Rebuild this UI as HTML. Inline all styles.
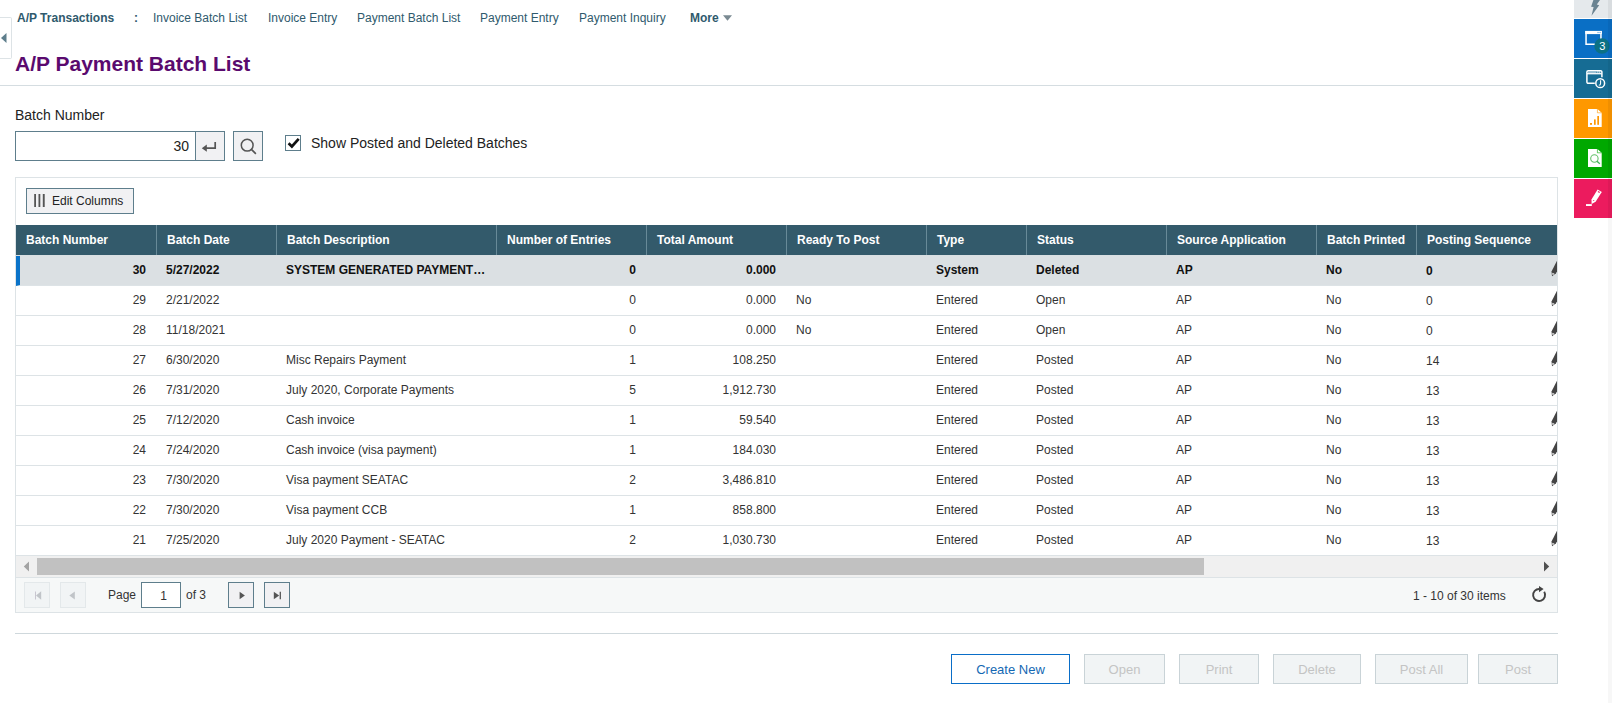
<!DOCTYPE html>
<html><head><meta charset="utf-8">
<style>
*{box-sizing:border-box;margin:0;padding:0}
html,body{width:1612px;height:703px;overflow:hidden;background:#fff;font-family:"Liberation Sans",sans-serif;color:#222;position:relative}
.a{position:absolute;white-space:nowrap}
.nav{font-size:12px;color:#2f5a6d;line-height:14px}
.nav b{font-weight:bold}
.tab{left:-1px;top:17px;width:13px;height:42px;border:1px solid #dde3e6;border-left:none;border-radius:0 2px 2px 0;background:#fff}
.title{left:15px;top:52px;font-size:21px;font-weight:bold;color:#5a0a6e;line-height:24px}
.hr{left:0;top:85px;width:1573px;height:1px;background:#d5dde1}
.lbl{left:15px;top:107px;font-size:14px;line-height:16px;color:#222}
.inp{left:15px;top:131px;width:182px;height:30px;border:1px solid #5e7e8c;background:#fff}
.inp span{position:absolute;right:7px;top:6px;font-size:14px;line-height:16px;color:#222}
.ent{left:195px;top:131px;width:30px;height:30px;border:1px solid #5e7e8c;background:#f1f1f3}
.srch{left:233px;top:131px;width:30px;height:30px;border:1px solid #5e7e8c;background:#f1f1f3}
.chk{left:285px;top:135px;width:16px;height:16px;border:1px solid #5e7e8c;background:#fff}
.chklbl{left:311px;top:135px;font-size:14px;line-height:16px;color:#222}
.grid{left:15px;top:177px;width:1543px;height:436px;border:1px solid #dde3e6;background:#fff}
.editcol{left:26px;top:188px;width:108px;height:26px;border:1px solid #5e7e8c;background:#f1f1f3;font-size:12px;line-height:14px;color:#222}
.hdr{left:16px;top:225px;width:1541px;height:30px;background:#335a6b}
.hdr span{position:absolute;top:8px;font-size:12px;font-weight:bold;color:#fff;line-height:14px;white-space:nowrap}
.hdr i{position:absolute;top:0;width:1px;height:30px;background:#688a98}
.row{position:absolute;left:16px;width:1541px;height:30px;border-bottom:1px solid #dde3e6;font-size:12px;color:#333;overflow:hidden}
.row span{position:absolute;top:7px;line-height:14px;white-space:nowrap}
.row .pen{position:absolute;left:1535px;top:5px}
.row.sel{background:#dbe0e3;font-weight:bold;color:#111;border-left:4px solid #0a73c9}
.row.sel span,.row.sel .pen{margin-left:-4px}
.r{text-align:right}
.scr{left:16px;top:556px;width:1541px;height:22px;background:#f0f0f0;border-bottom:1px solid #dde3e6}
.thumb{left:37px;top:559px;width:1167px;height:15px;background:#c1c1c1}
.pager{left:16px;top:578px;width:1541px;height:34px;background:#f6f8f8}
.pbtn{width:26px;height:26px;border:1px solid #5e7e8c;background:#f1f1f3}
.pbtn.dis{border-color:#e3e8ea;background:#f1f4f5}
.hr2{left:15px;top:633px;width:1543px;height:1px;background:#cfd8dc}
.btn{top:654px;height:30px;font-size:13px;line-height:15px;text-align:center;padding-top:7px;border:1px solid #c9d3d7;background:#f1f4f5;color:#c4c4c4}
.btn.pri{border-color:#0a6ec8;background:#fff;color:#1468b3}
.side{left:1573px;width:39px}
</style></head><body>
<!-- nav -->
<div class="a nav" style="left:17px;top:11px"><b>A/P Transactions</b></div>
<div class="a nav" style="left:134px;top:11px"><b>:</b></div>
<div class="a nav" style="left:153px;top:11px">Invoice Batch List</div>
<div class="a nav" style="left:268px;top:11px">Invoice Entry</div>
<div class="a nav" style="left:357px;top:11px">Payment Batch List</div>
<div class="a nav" style="left:480px;top:11px">Payment Entry</div>
<div class="a nav" style="left:579px;top:11px">Payment Inquiry</div>
<div class="a nav" style="left:690px;top:11px"><b>More</b></div>
<svg class="a" style="left:723px;top:15px" width="10" height="7" viewBox="0 0 10 7"><path d="M0 0.3h9l-4.5 5.4z" fill="#7a8a92"/></svg>
<div class="a tab"></div>
<svg class="a" style="left:0px;top:32px" width="7" height="12" viewBox="0 0 7 12"><path d="M6.5 1v10L1 6z" fill="#5e7e8c"/></svg>

<div class="a title">A/P Payment Batch List</div>
<div class="a hr"></div>

<div class="a lbl">Batch Number</div>
<div class="a inp"><span>30</span></div>
<div class="a ent"><svg style="position:absolute;left:5px;top:9px" width="18" height="12" viewBox="0 0 18 12"><path d="M14.2 1v6.2H5" stroke="#555" stroke-width="1.7" fill="none"/><path d="M0.8 7.2l5-3.6v7.2z" fill="#555"/></svg></div>
<div class="a srch"><svg style="position:absolute;left:5px;top:5px" width="20" height="20" viewBox="0 0 20 20"><circle cx="8.2" cy="8.2" r="5.9" stroke="#555" stroke-width="1.5" fill="none"/><path d="M12.4 12.4l4.5 4.5" stroke="#555" stroke-width="1.6"/></svg></div>
<div class="a chk"><svg style="position:absolute;left:1px;top:1px" width="13" height="12" viewBox="0 0 13 12"><path d="M1.6 6.2l3.3 3.3 6.8-7.6" stroke="#111" stroke-width="2.7" fill="none"/></svg></div>
<div class="a chklbl">Show Posted and Deleted Batches</div>

<div class="a grid"></div>
<div class="a editcol"><svg style="position:absolute;left:7px;top:5px" width="12" height="14" viewBox="0 0 12 14"><rect x="0.2" y="0" width="1.8" height="13" fill="#555"/><rect x="4.5" y="0" width="1.8" height="13" fill="#555"/><rect x="8.8" y="0" width="1.9" height="13" fill="#555"/></svg><span style="position:absolute;left:25px;top:5px">Edit Columns</span></div>
<div class="a" style="left:16px;top:255px;width:1541px;height:1px;background:#d9dfe2"></div>
<div class="a hdr">
<span style="left:10px">Batch Number</span>
<span style="left:151px">Batch Date</span>
<span style="left:271px">Batch Description</span>
<span style="left:491px">Number of Entries</span>
<span style="left:641px">Total Amount</span>
<span style="left:781px">Ready To Post</span>
<span style="left:921px">Type</span>
<span style="left:1021px">Status</span>
<span style="left:1161px">Source Application</span>
<span style="left:1311px">Batch Printed</span>
<span style="left:1411px">Posting Sequence</span>
<i style="left:140px"></i>
<i style="left:260px"></i>
<i style="left:480px"></i>
<i style="left:630px"></i>
<i style="left:770px"></i>
<i style="left:910px"></i>
<i style="left:1010px"></i>
<i style="left:1150px"></i>
<i style="left:1300px"></i>
<i style="left:1400px"></i>
</div>
<div class="row sel" style="top:256px">
<span class="r" style="right:1411px">30</span>
<span style="left:150px">5/27/2022</span>
<span style="left:270px">SYSTEM GENERATED PAYMENT…</span>
<span class="r" style="right:921px">0</span>
<span class="r" style="right:781px">0.000</span>
<span style="left:920px">System</span>
<span style="left:1020px">Deleted</span>
<span style="left:1160px">AP</span>
<span style="left:1310px">No</span>
<span style="left:1410px;top:8px">0</span>
<svg class="pen" width="12" height="17" viewBox="0 0 12 17"><path d="M1 15.2L0.5 10.6L7 -2.2L11.2 -0.2L4.9 12.6Z" fill="#444"/><path d="M1.5 14.1L1.3 11.7L3.8 12.9Z" fill="#fff"/></svg>
</div>
<div class="row" style="top:286px">
<span class="r" style="right:1411px">29</span>
<span style="left:150px">2/21/2022</span>
<span class="r" style="right:921px">0</span>
<span class="r" style="right:781px">0.000</span>
<span style="left:780px">No</span>
<span style="left:920px">Entered</span>
<span style="left:1020px">Open</span>
<span style="left:1160px">AP</span>
<span style="left:1310px">No</span>
<span style="left:1410px;top:8px">0</span>
<svg class="pen" width="12" height="17" viewBox="0 0 12 17"><path d="M1 15.2L0.5 10.6L7 -2.2L11.2 -0.2L4.9 12.6Z" fill="#444"/><path d="M1.5 14.1L1.3 11.7L3.8 12.9Z" fill="#fff"/></svg>
</div>
<div class="row" style="top:316px">
<span class="r" style="right:1411px">28</span>
<span style="left:150px">11/18/2021</span>
<span class="r" style="right:921px">0</span>
<span class="r" style="right:781px">0.000</span>
<span style="left:780px">No</span>
<span style="left:920px">Entered</span>
<span style="left:1020px">Open</span>
<span style="left:1160px">AP</span>
<span style="left:1310px">No</span>
<span style="left:1410px;top:8px">0</span>
<svg class="pen" width="12" height="17" viewBox="0 0 12 17"><path d="M1 15.2L0.5 10.6L7 -2.2L11.2 -0.2L4.9 12.6Z" fill="#444"/><path d="M1.5 14.1L1.3 11.7L3.8 12.9Z" fill="#fff"/></svg>
</div>
<div class="row" style="top:346px">
<span class="r" style="right:1411px">27</span>
<span style="left:150px">6/30/2020</span>
<span style="left:270px">Misc Repairs Payment</span>
<span class="r" style="right:921px">1</span>
<span class="r" style="right:781px">108.250</span>
<span style="left:920px">Entered</span>
<span style="left:1020px">Posted</span>
<span style="left:1160px">AP</span>
<span style="left:1310px">No</span>
<span style="left:1410px;top:8px">14</span>
<svg class="pen" width="12" height="17" viewBox="0 0 12 17"><path d="M1 15.2L0.5 10.6L7 -2.2L11.2 -0.2L4.9 12.6Z" fill="#444"/><path d="M1.5 14.1L1.3 11.7L3.8 12.9Z" fill="#fff"/></svg>
</div>
<div class="row" style="top:376px">
<span class="r" style="right:1411px">26</span>
<span style="left:150px">7/31/2020</span>
<span style="left:270px">July 2020, Corporate Payments</span>
<span class="r" style="right:921px">5</span>
<span class="r" style="right:781px">1,912.730</span>
<span style="left:920px">Entered</span>
<span style="left:1020px">Posted</span>
<span style="left:1160px">AP</span>
<span style="left:1310px">No</span>
<span style="left:1410px;top:8px">13</span>
<svg class="pen" width="12" height="17" viewBox="0 0 12 17"><path d="M1 15.2L0.5 10.6L7 -2.2L11.2 -0.2L4.9 12.6Z" fill="#444"/><path d="M1.5 14.1L1.3 11.7L3.8 12.9Z" fill="#fff"/></svg>
</div>
<div class="row" style="top:406px">
<span class="r" style="right:1411px">25</span>
<span style="left:150px">7/12/2020</span>
<span style="left:270px">Cash invoice</span>
<span class="r" style="right:921px">1</span>
<span class="r" style="right:781px">59.540</span>
<span style="left:920px">Entered</span>
<span style="left:1020px">Posted</span>
<span style="left:1160px">AP</span>
<span style="left:1310px">No</span>
<span style="left:1410px;top:8px">13</span>
<svg class="pen" width="12" height="17" viewBox="0 0 12 17"><path d="M1 15.2L0.5 10.6L7 -2.2L11.2 -0.2L4.9 12.6Z" fill="#444"/><path d="M1.5 14.1L1.3 11.7L3.8 12.9Z" fill="#fff"/></svg>
</div>
<div class="row" style="top:436px">
<span class="r" style="right:1411px">24</span>
<span style="left:150px">7/24/2020</span>
<span style="left:270px">Cash invoice (visa payment)</span>
<span class="r" style="right:921px">1</span>
<span class="r" style="right:781px">184.030</span>
<span style="left:920px">Entered</span>
<span style="left:1020px">Posted</span>
<span style="left:1160px">AP</span>
<span style="left:1310px">No</span>
<span style="left:1410px;top:8px">13</span>
<svg class="pen" width="12" height="17" viewBox="0 0 12 17"><path d="M1 15.2L0.5 10.6L7 -2.2L11.2 -0.2L4.9 12.6Z" fill="#444"/><path d="M1.5 14.1L1.3 11.7L3.8 12.9Z" fill="#fff"/></svg>
</div>
<div class="row" style="top:466px">
<span class="r" style="right:1411px">23</span>
<span style="left:150px">7/30/2020</span>
<span style="left:270px">Visa payment SEATAC</span>
<span class="r" style="right:921px">2</span>
<span class="r" style="right:781px">3,486.810</span>
<span style="left:920px">Entered</span>
<span style="left:1020px">Posted</span>
<span style="left:1160px">AP</span>
<span style="left:1310px">No</span>
<span style="left:1410px;top:8px">13</span>
<svg class="pen" width="12" height="17" viewBox="0 0 12 17"><path d="M1 15.2L0.5 10.6L7 -2.2L11.2 -0.2L4.9 12.6Z" fill="#444"/><path d="M1.5 14.1L1.3 11.7L3.8 12.9Z" fill="#fff"/></svg>
</div>
<div class="row" style="top:496px">
<span class="r" style="right:1411px">22</span>
<span style="left:150px">7/30/2020</span>
<span style="left:270px">Visa payment CCB</span>
<span class="r" style="right:921px">1</span>
<span class="r" style="right:781px">858.800</span>
<span style="left:920px">Entered</span>
<span style="left:1020px">Posted</span>
<span style="left:1160px">AP</span>
<span style="left:1310px">No</span>
<span style="left:1410px;top:8px">13</span>
<svg class="pen" width="12" height="17" viewBox="0 0 12 17"><path d="M1 15.2L0.5 10.6L7 -2.2L11.2 -0.2L4.9 12.6Z" fill="#444"/><path d="M1.5 14.1L1.3 11.7L3.8 12.9Z" fill="#fff"/></svg>
</div>
<div class="row" style="top:526px">
<span class="r" style="right:1411px">21</span>
<span style="left:150px">7/25/2020</span>
<span style="left:270px">July 2020 Payment - SEATAC</span>
<span class="r" style="right:921px">2</span>
<span class="r" style="right:781px">1,030.730</span>
<span style="left:920px">Entered</span>
<span style="left:1020px">Posted</span>
<span style="left:1160px">AP</span>
<span style="left:1310px">No</span>
<span style="left:1410px;top:8px">13</span>
<svg class="pen" width="12" height="17" viewBox="0 0 12 17"><path d="M1 15.2L0.5 10.6L7 -2.2L11.2 -0.2L4.9 12.6Z" fill="#444"/><path d="M1.5 14.1L1.3 11.7L3.8 12.9Z" fill="#fff"/></svg>
</div>
<div class="a scr"></div>
<div class="a" style="left:37px;top:558px;width:1167px;height:17px;background:#c1c1c1"></div>
<svg class="a" style="left:23px;top:561px" width="7" height="11" viewBox="0 0 7 11"><path d="M6 0.5v10L0.8 5.5z" fill="#a3a3a3"/></svg>
<svg class="a" style="left:1543px;top:561px" width="7" height="11" viewBox="0 0 7 11"><path d="M1 0.5v10L6.2 5.5z" fill="#505050"/></svg>
<div class="a pager"></div>
<div class="a pbtn dis" style="left:24px;top:582px"><svg style="position:absolute;left:7px;top:7px" width="11" height="11" viewBox="0 0 11 11"><path d="M3.5 1.5v8" stroke="#c8c6d0" stroke-width="1"/><path d="M9.2 1.2v8.6L4 5.5z" fill="#c0c4c8"/></svg></div>
<div class="a pbtn dis" style="left:60px;top:582px"><svg style="position:absolute;left:7px;top:7px" width="11" height="11" viewBox="0 0 11 11"><path d="M6.8 1.4v8.2L1.3 5.5z" fill="#c0c4c8"/></svg></div>
<div class="a" style="left:108px;top:588px;font-size:12px;line-height:14px;color:#333">Page</div>
<div class="a" style="left:141px;top:582px;width:40px;height:26px;border:1px solid #5e7e8c;background:#fff;font-size:12px;line-height:14px;color:#333;text-align:center;padding-top:6px;padding-left:5px">1</div>
<div class="a" style="left:186px;top:588px;font-size:12px;line-height:14px;color:#333">of 3</div>
<div class="a pbtn" style="left:228px;top:582px"><svg style="position:absolute;left:8px;top:7px" width="11" height="11" viewBox="0 0 11 11"><path d="M2.6 1.8v7.4L7.9 5.5z" fill="#555"/></svg></div>
<div class="a pbtn" style="left:264px;top:582px"><svg style="position:absolute;left:7px;top:7px" width="11" height="11" viewBox="0 0 11 11"><path d="M1.8 1.8v7.4L7.2 5.5z" fill="#555"/><path d="M8.3 1.8v7.4" stroke="#555" stroke-width="1.3"/></svg></div>
<div class="a" style="left:1413px;top:589px;font-size:12px;line-height:14px;color:#333">1 - 10 of 30 items</div>
<svg class="a" style="left:1530px;top:585px" width="18" height="18" viewBox="0 0 18 18"><path d="M9.5 4A6 6 0 1 0 14.2 6.8" stroke="#444" stroke-width="1.9" fill="none"/><path d="M9 1L13.6 4.1L9 7.2z" fill="#444"/></svg>
<div class="a hr2"></div>

<div class="a btn pri" style="left:951px;width:119px">Create New</div>
<div class="a btn" style="left:1084px;width:81px">Open</div>
<div class="a btn" style="left:1179px;width:80px">Print</div>
<div class="a btn" style="left:1273px;width:88px">Delete</div>
<div class="a btn" style="left:1375px;width:93px">Post All</div>
<div class="a btn" style="left:1478px;width:80px">Post</div>


<!-- sidebar -->
<div class="a" style="left:1574px;top:0;width:38px;height:18px;background:#e5e9ec"></div>
<svg class="a" style="left:1574px;top:0" width="38" height="18" viewBox="1574 0 38 18"><path d="M1593.4 0H1600L1596.8 4.6L1599.2 5.2L1591.5 15.7L1593.6 7L1591.1 6.8Z" fill="#6a8391"/></svg>
<div class="a" style="left:1574px;top:19px;width:38px;height:39px;background:#0a6fc5"></div>
<svg class="a" style="left:1574px;top:19px" width="38" height="39" viewBox="1574 19 38 39">
<path d="M1586.05 31.8h14.9v12.4h-14.9z" stroke="#fff" stroke-width="1.5" fill="none"/>
<rect x="1585.3" y="30.9" width="16.5" height="3.2" fill="#fff"/>
<rect x="1597.4" y="31.9" width="1.3" height="1.2" fill="#6fb0e8"/><rect x="1599.4" y="31.9" width="1.3" height="1.2" fill="#6fb0e8"/>
<circle cx="1602" cy="46" r="7.7" fill="#0b7185"/>
<text x="1602.2" y="50" font-family="Liberation Sans" font-size="11" fill="#fff" text-anchor="middle">3</text>
</svg>
<div class="a" style="left:1574px;top:59px;width:38px;height:39px;background:#166c94"></div>
<svg class="a" style="left:1574px;top:59px" width="38" height="39" viewBox="1574 59 38 39">
<path d="M1594.8 83.3h-6.6a1.3 1.3 0 0 1-1.3-1.3v-10a1.3 1.3 0 0 1 1.3-1.3h12.4a1.3 1.3 0 0 1 1.3 1.3v5.3" stroke="#fff" stroke-width="1.5" fill="none"/>
<path d="M1587 73.7h14.6" stroke="#fff" stroke-width="1.3"/>
<rect x="1588" y="71.3" width="8.5" height="1.6" fill="#a9c9da"/>
<rect x="1597.4" y="71.3" width="1" height="1.6" fill="#fff"/><rect x="1599.3" y="71.3" width="1" height="1.6" fill="#fff"/>
<circle cx="1600.2" cy="83.2" r="4.4" stroke="#fff" stroke-width="1.5" fill="#166c94"/>
<path d="M1600.6 80.2v3.3c0 1.2-0.8 1.8-1.8 1.8" stroke="#fff" stroke-width="1.1" fill="none"/>
</svg>
<div class="a" style="left:1574px;top:99px;width:38px;height:39px;background:#fe9800"></div>
<svg class="a" style="left:1574px;top:99px" width="38" height="39" viewBox="1574 99 38 39">
<path d="M1588 109h9.4l4.3 3.8v14.3h-13.7z" fill="#fff"/>
<path d="M1597.4 109v3.8h4.3" stroke="#fe9800" stroke-width="0.6" fill="none"/>
<rect x="1590" y="123" width="2" height="1.8" fill="#fe9800"/>
<rect x="1594" y="119.4" width="1.7" height="5.4" fill="#fe9800"/>
<rect x="1597.3" y="116" width="1.7" height="8.8" fill="#fe9800"/>
</svg>
<div class="a" style="left:1574px;top:139px;width:38px;height:39px;background:#00a800"></div>
<svg class="a" style="left:1574px;top:139px" width="38" height="39" viewBox="1574 139 38 39">
<path d="M1588 149h9.4l4.3 3.8v14.3h-13.7z" fill="#fff"/>
<path d="M1597.4 149v3.8h4.3" stroke="#00a800" stroke-width="0.6" fill="none"/>
<circle cx="1594.4" cy="158.5" r="3.7" stroke="#63c06a" stroke-width="1.1" fill="none"/>
<path d="M1597 161.2l2.8 2.6" stroke="#3fb25a" stroke-width="1.3"/>
</svg>
<div class="a" style="left:1574px;top:179px;width:38px;height:39px;background:#ec1b5e"></div>
<svg class="a" style="left:1574px;top:179px" width="38" height="39" viewBox="1574 179 38 39">
<path d="M1591.6 204L1591.5 199.5L1597.6 189.6L1601.8 191.9L1595.6 201.8Z" fill="#fff"/>
<path d="M1592.9 200.9L1593.3 199.9L1594.7 201.1Z" fill="#ec1b5e"/>
<rect x="1597.8" y="191.3" width="2" height="1.3" transform="rotate(30 1598.8 192)" fill="#ec1b5e"/>
<rect x="1586" y="204.1" width="5.8" height="1.9" fill="#fff"/>
</svg>
<div class="a" style="left:1608px;top:0;width:4px;height:218px;background:rgba(0,0,0,0.055)"></div>
<div class="a" style="left:1608px;top:218px;width:4px;height:485px;background:rgba(0,0,0,0.03)"></div>
</body></html>
